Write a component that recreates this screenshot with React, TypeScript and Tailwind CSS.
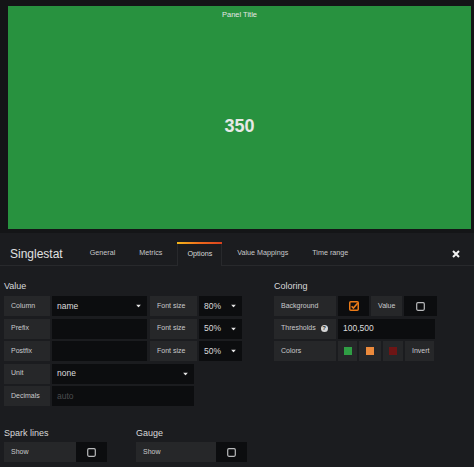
import React from "react";

const font = { fontFamily: '"Liberation Sans", Arial, sans-serif' };

function Caret() {
  return (
    <svg width="5" height="3" viewBox="0 0 5 3" className="absolute right-[6px] top-1/2 -translate-y-1/2">
      <path d="M0 0H5L2.5 3Z" fill="#e6e6e6" />
    </svg>
  );
}

function Label({ w, children, className = "" }: { w: string; children?: React.ReactNode; className?: string }) {
  return (
    <div className={`${w} h-5 bg-[#262729] flex items-center pl-[7px] text-[7px] text-[#c9cacc] shrink-0 ${className}`}>
      {children}
    </div>
  );
}

function Input({ w, children, select, placeholder }: { w: string; children?: React.ReactNode; select?: boolean; placeholder?: boolean }) {
  return (
    <div className={`${w} relative h-5 bg-[#0c0d0f] flex items-center pl-[5px] text-[8.5px] shrink-0 ${placeholder ? "text-[#4b4c4e]" : "text-[#dcdcdd]"}`}>
      {children}
      {select && <Caret />}
    </div>
  );
}

function Check({ w, checked }: { w: string; checked?: boolean }) {
  return (
    <div className={`${w} h-5 bg-[#0c0d0f] flex items-center justify-center shrink-0`}>
      {checked ? (
        <svg width="10" height="10" viewBox="0 0 10 10">
          <rect x="0.75" y="0.75" width="8.5" height="8.5" rx="1" fill="none" stroke="#eb7b18" strokeWidth="1.5" />
          <path d="M2.6 5.2L4.4 7L8.8 2" fill="none" stroke="#eb7b18" strokeWidth="1.6" />
        </svg>
      ) : (
        <svg width="9" height="9" viewBox="0 0 9 9">
          <rect x="0.7" y="0.7" width="7.6" height="7.6" rx="1.2" fill="none" stroke="#b9babc" strokeWidth="1.2" />
        </svg>
      )}
    </div>
  );
}

function Swatch({ w, color }: { w: string; color: string }) {
  return (
    <div className={`${w} h-5 bg-[#262729] flex items-center justify-center shrink-0`}>
      <div className={`w-[8px] h-[8px] ${color}`} />
    </div>
  );
}

export default function App() {
  const tabs = ["General", "Metrics", "Options", "Value Mappings", "Time range"];
  return (
    <div className="w-[474px] h-[467px] overflow-hidden bg-[#1b1c1f]" style={font}>
      <div className="h-[233px] bg-[#141517] pt-[6px] pl-[8px] pr-[3px]">
        <div className="h-[223px] bg-[#28923f] flex flex-col items-center">
          <div className="mt-[4px] text-[7.5px] leading-[10px] text-[#e4e6e4]">Panel Title</div>
          <div className="mt-[95px] text-[18px] font-bold leading-[22px] text-[#e6e8e6]">350</div>
        </div>
      </div>
      <div className="pt-[9px]">
        <div className="h-[24px] flex items-stretch border-b border-[#28292c] pl-[10px] pr-[14px]">
          <div className="flex items-center text-[12px] text-[#e0e1e2] mr-[18px]">Singlestat</div>
          <div className="flex items-stretch gap-[6px]">
            {tabs.map((t) =>
              t === "Options" ? (
                <div key={t} className="relative -mb-px px-[9px] flex items-center text-[7.2px] text-[#d8d9da] bg-[#1b1c1f] border-x border-[#28292c]">
                  <div className="absolute left-[-1px] right-[-1px] top-0 h-[2px] bg-gradient-to-r from-[#f2b61b] via-[#ef6a1b] to-[#d9411e]" />
                  {t}
                </div>
              ) : (
                <div key={t} className="px-[9px] flex items-center text-[7.2px] text-[#c7c8ca]">
                  {t}
                </div>
              )
            )}
          </div>
          <div className="ml-auto flex items-center">
            <svg width="8" height="8" viewBox="0 0 8 8">
              <path d="M1 1L7 7M7 1L1 7" stroke="#f2f2f2" strokeWidth="2" />
            </svg>
          </div>
        </div>
        <div className="pl-[4px] pt-[14px]">
          <div className="flex">
            <div className="w-[270px]">
              <div className="h-3 text-[9px] leading-3 text-[#d8d9da] mb-[4px]">Value</div>
              <div className="flex flex-col gap-[2.5px]">
                <div className="flex">
                  <Label w="w-[46px]">Column</Label>
                  <div className="w-[2px]" />
                  <Input w="w-[95px]" select>name</Input>
                  <div className="w-[3px]" />
                  <Label w="w-[47px]" className="pl-[6px]">Font size</Label>
                  <div className="w-[2px]" />
                  <Input w="w-[43px]" select>80%</Input>
                </div>
                <div className="flex">
                  <Label w="w-[46px]">Prefix</Label>
                  <div className="w-[2px]" />
                  <Input w="w-[95px]" />
                  <div className="w-[3px]" />
                  <Label w="w-[47px]" className="pl-[5px]">Font size</Label>
                  <div className="w-[2px]" />
                  <Input w="w-[43px]" select>50%</Input>
                </div>
                <div className="flex">
                  <Label w="w-[46px]">Postfix</Label>
                  <div className="w-[2px]" />
                  <Input w="w-[95px]" />
                  <div className="w-[3px]" />
                  <Label w="w-[47px]" className="pl-[5px]">Font size</Label>
                  <div className="w-[2px]" />
                  <Input w="w-[43px]" select>50%</Input>
                </div>
                <div className="flex">
                  <Label w="w-[46px]">Unit</Label>
                  <div className="w-[2px]" />
                  <Input w="w-[142px]" select>none</Input>
                </div>
                <div className="flex">
                  <Label w="w-[46px]">Decimals</Label>
                  <div className="w-[2px]" />
                  <Input w="w-[142px]" placeholder>auto</Input>
                </div>
              </div>
            </div>
            <div>
              <div className="h-3 text-[9px] leading-3 text-[#d8d9da] mb-[4px]">Coloring</div>
              <div className="flex flex-col gap-[2.5px]">
                <div className="flex gap-[2px]">
                  <Label w="w-[62px]">Background</Label>
                  <Check w="w-[31px]" checked />
                  <Label w="w-[31px]" className="pl-[5px]">Value</Label>
                  <Check w="w-[33px]" />
                </div>
                <div className="flex gap-[2px]">
                  <Label w="w-[62px]">
                    Thresholds
                    <span className="ml-[5px] w-[7px] h-[7px] rounded-full bg-[#d6d6d6] text-[#262729] text-[6px] font-bold leading-[7px] flex items-center justify-center">?</span>
                  </Label>
                  <Input w="w-[97px]">100,500</Input>
                </div>
                <div className="flex gap-[2px]">
                  <Label w="w-[62px]">Colors</Label>
                  <Swatch w="w-[19px]" color="bg-[#2f9e44]" />
                  <Swatch w="w-[22px]" color="bg-[#ec8a3c]" />
                  <Swatch w="w-[20px]" color="bg-[#6e1515]" />
                  <Label w="w-[29px]" className="pl-[5px]">Invert</Label>
                </div>
              </div>
            </div>
          </div>
          <div className="flex mt-[21px]">
            <div className="w-[132px]">
              <div className="h-3 text-[9px] leading-3 text-[#d8d9da] mb-[3px]">Spark lines</div>
              <div className="flex">
                <Label w="w-[72px]">Show</Label>
                <Check w="w-[31px]" />
              </div>
            </div>
            <div>
              <div className="h-3 text-[9px] leading-3 text-[#d8d9da] mb-[3px]">Gauge</div>
              <div className="flex">
                <Label w="w-[80px]">Show</Label>
                <Check w="w-[31px]" />
              </div>
            </div>
          </div>
        </div>
      </div>
    </div>
  );
}
